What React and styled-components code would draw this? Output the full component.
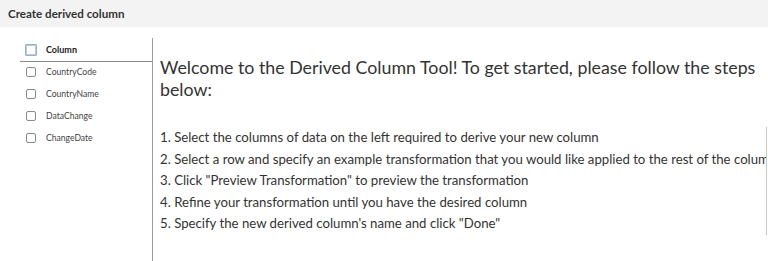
import React from "react";
import styled, { createGlobalStyle } from "styled-components";

const GlobalStyle = createGlobalStyle`
  html, body {
    margin: 0;
    padding: 0;
    background: #fff;
  }
  body {
    font-family: Lato, "Open Sans", sans-serif;
    color: #333;
  }
`;

const Page = styled.div`
  width: 768px;
  height: 261px;
  overflow: hidden;
  display: flex;
  flex-direction: column;
`;

const TitleBar = styled.div`
  height: 27px;
  background: #f3f3f3;
  display: flex;
  align-items: center;
  padding-left: 8px;
  font-size: 11.6px;
  font-weight: 700;
  color: #333;
  flex-shrink: 0;
`;

const Body = styled.div`
  flex: 1;
  display: flex;
  padding-top: 11px;
  min-height: 0;
`;

const Sidebar = styled.div`
  width: 153px;
  flex-shrink: 0;
  border-right: 1px solid #9a9a9a;
  padding-left: 20px;
  box-sizing: border-box;
`;

const HeaderRow = styled.div`
  display: flex;
  align-items: center;
  height: 23px;
  border-bottom: 1px solid #8a8a8a;
  padding-left: 5px;
  gap: 9px;
  font-size: 9px;
  font-weight: 700;
  color: #222;
`;

const Box = styled.span`
  display: inline-block;
  box-sizing: border-box;
  width: ${p => (p.big ? 12 : 10)}px;
  height: ${p => (p.big ? 12 : 10)}px;
  border: 1px solid ${p => (p.big ? "#8fb3e0" : "#8a8a8a")};
  border-radius: ${p => (p.big ? 1 : 2)}px;
  background: #fff;
  box-shadow: ${p => (p.big ? "inset 0 0 0 1px #c8c8c8" : "none")};
`;

const Row = styled.div`
  display: flex;
  align-items: center;
  height: 22px;
  padding-left: 6px;
  gap: 10px;
  font-size: 8.6px;
  color: #444;
`;

const List = styled.div`
  margin-top: -1px;
`;

const Content = styled.div`
  flex: 1;
  min-width: 0;
  overflow: hidden;
  padding: 18px 0 0 7px;
  white-space: nowrap;
`;

const Heading = styled.div`
  font-size: 17.8px;
  line-height: 22px;
  color: #333;
  white-space: normal;
  width: 605px;
`;

const Steps = styled.ol`
  list-style: none;
  margin: 27px 1px 0 0;
  padding: 0;
  border-right: 1px solid #c8c8c8;
`;

const Step = styled.li`
  font-size: 13.2px;
  line-height: 21.5px;
  color: #333;
  overflow: hidden;
`;

const columns = ["CountryCode", "CountryName", "DataChange", "ChangeDate"];

const steps = [
  "Select the columns of data on the left required to derive your new column",
  "Select a row and specify an example transformation that you would like applied to the rest of the column",
  'Click "Preview Transformation" to preview the transformation',
  "Refine your transformation until you have the desired column",
  'Specify the new derived column\'s name and click "Done"',
];

export default function App() {
  return (
    <Page>
      <GlobalStyle />
      <TitleBar>Create derived column</TitleBar>
      <Body>
        <Sidebar>
          <HeaderRow>
            <Box big />
            Column
          </HeaderRow>
          <List>
            {columns.map(c => (
              <Row key={c}>
                <Box />
                {c}
              </Row>
            ))}
          </List>
        </Sidebar>
        <Content>
          <Heading>
            Welcome to the Derived Column Tool! To get started, please follow the steps below:
          </Heading>
          <Steps>
            {steps.map((s, i) => (
              <Step key={i}>
                {i + 1}. {s}
              </Step>
            ))}
          </Steps>
        </Content>
      </Body>
    </Page>
  );
}
